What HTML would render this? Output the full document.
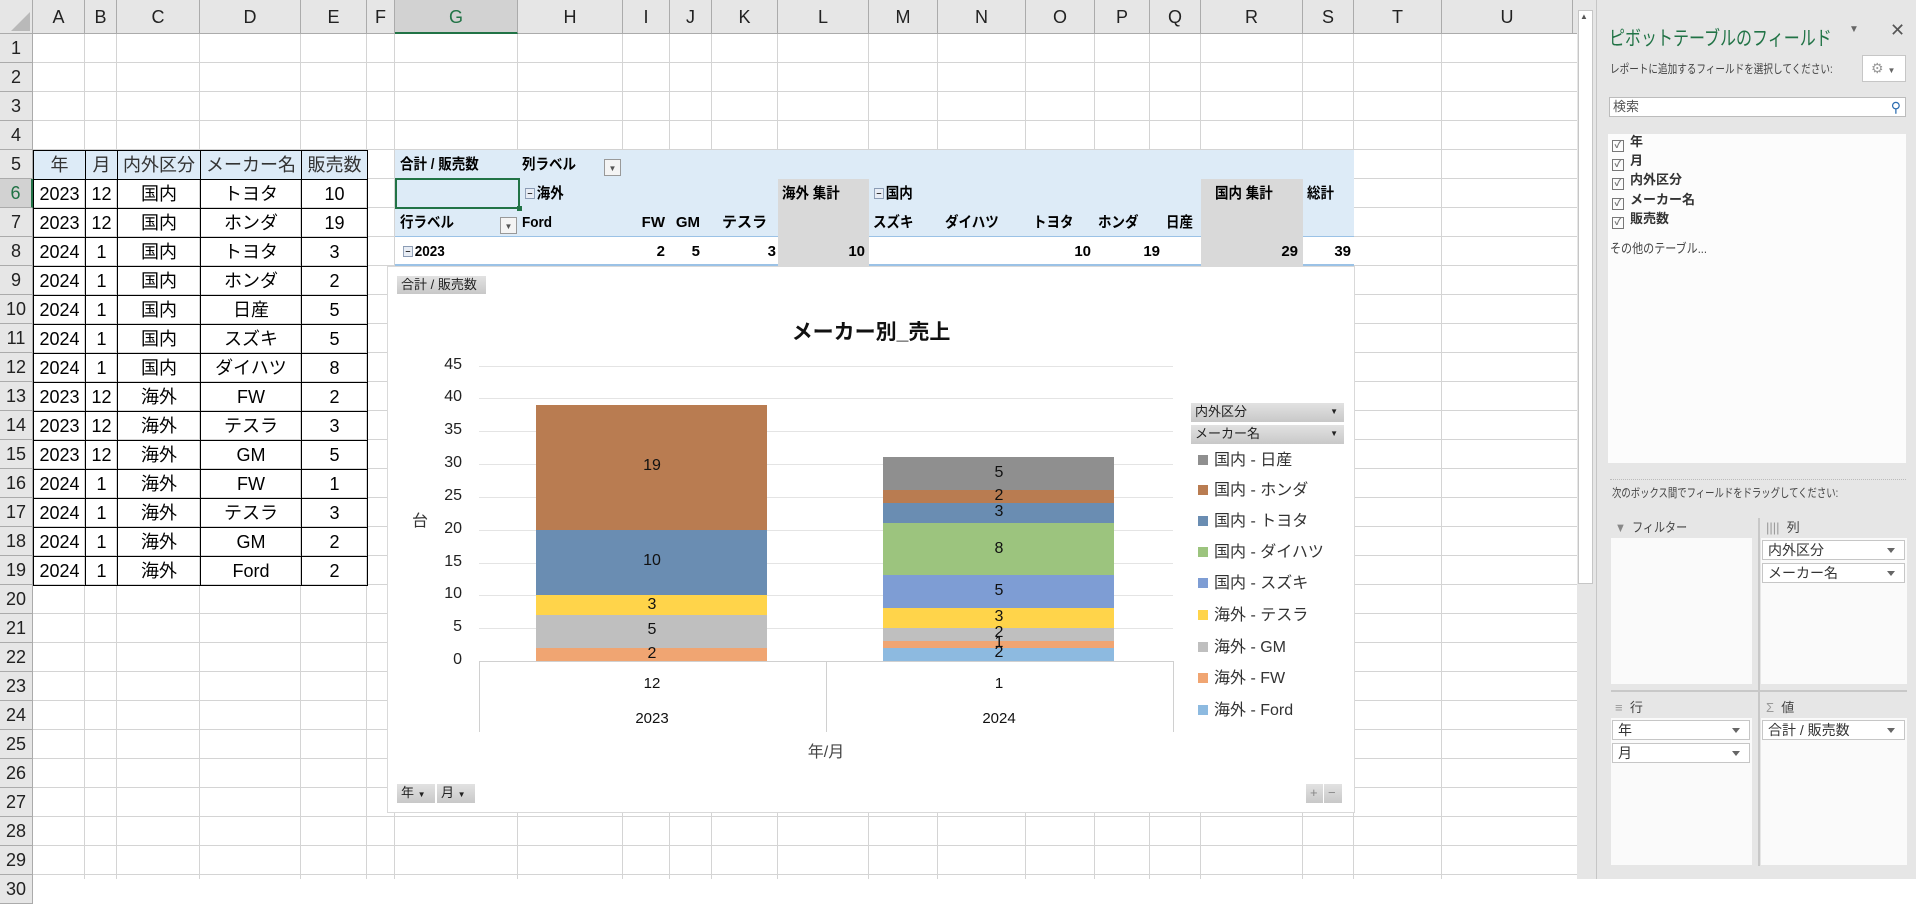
<!DOCTYPE html>
<html><head><meta charset="utf-8"><style>
*{margin:0;padding:0;box-sizing:border-box}
body{width:1916px;height:879px;position:relative;overflow:hidden;background:#fff;font-family:"Liberation Sans","Noto Sans CJK JP",sans-serif;color:#000}
.a{position:absolute}
.vl{position:absolute;top:34px;height:845px;width:1px;background:#d4d4d4}
.ch{position:absolute;top:0;height:34px;font-size:18px;color:#222;text-align:center;line-height:34px;border-right:1px solid #ababab;background:#e6e6e6;border-bottom:1px solid #ababab}
.rh{position:absolute;left:0;width:33px;height:29px;font-size:18px;color:#222;text-align:center;line-height:29px;background:#e6e6e6;border-bottom:1px solid #ababab;border-right:1px solid #ababab}
table.d{position:absolute;left:33px;top:150px;border-collapse:collapse;font-size:18px}
table.d td{border:1.5px solid #000;height:29px;text-align:center;padding:0;line-height:26px}
table.d tr:first-child td{background:#ddebf7;color:#333}
.pv{position:absolute;font-size:15px;font-weight:bold;line-height:29px;white-space:nowrap;transform:scaleX(0.9);transform-origin:left}
.pr{position:absolute;font-size:15px;font-weight:bold;line-height:29px;text-align:right;white-space:nowrap}
.dd{position:absolute;width:17px;height:17px;border:1px solid #999;background:#f4f4f4;font-size:8px;text-align:center;line-height:18px;color:#555}
.mn{display:inline-block;width:11px;height:11px;border:1px solid #8a9bb4;background:#e8edf5;vertical-align:-1px;margin-right:2px;position:relative}
.mn:after{content:"";position:absolute;left:2px;top:4px;width:5px;height:1px;background:#333}
.gl{position:absolute;left:479px;width:694px;height:1px;background:#e4e4e4}
.yl{position:absolute;left:420px;width:42px;text-align:right;font-size:16px;color:#222}
.seg{position:absolute}
.lb{position:absolute;font-size:16px;color:#111;text-align:center;width:40px}
.lg{position:absolute;left:1198px;font-size:16px;color:#333;line-height:20px}
.lg i{display:inline-block;width:10px;height:10px;margin-right:6px;vertical-align:0}
.btn{position:absolute;background:linear-gradient(#e2e2e2,#c8c8c8);font-size:13px;color:#222;line-height:18px;padding-left:4px}
.pane{position:absolute;left:1596px;top:0;width:320px;height:879px;background:#e6e6e6;border-left:1px solid #c6c6c6}
.fi{position:absolute;height:20px;background:#fff;border:1px solid #c6c6c6;font-size:14px;line-height:18px;padding-left:5px;color:#333}
.fi:after{content:"";position:absolute;right:9px;top:7px;border:4px solid transparent;border-top:5px solid #666}
.cb{position:absolute;left:1612px;font-size:13px;font-weight:bold;color:#333;line-height:16px}
.cb i{display:inline-block;width:12px;height:12px;border:1px solid #777;margin-right:6px;vertical-align:-2px;font-style:normal;font-size:10px;line-height:10px;text-align:center;color:#777}
.sx{transform-origin:left;white-space:nowrap}
</style></head><body>

<div class="a" style="left:0;top:0;width:33px;height:34px;background:#e6e6e6;border-right:1px solid #ababab;border-bottom:1px solid #ababab"></div>
<div class="a" style="left:11px;top:12px;width:0;height:0;border-left:19px solid transparent;border-bottom:19px solid #b9b9b9"></div>
<div class="ch" style="left:33px;width:52px">A</div>
<div class="ch" style="left:85px;width:32px">B</div>
<div class="ch" style="left:117px;width:83px">C</div>
<div class="ch" style="left:200px;width:101px">D</div>
<div class="ch" style="left:301px;width:66px">E</div>
<div class="ch" style="left:367px;width:28px">F</div>
<div class="ch" style="left:395px;width:123px;background:#d2d2d2;color:#217346;border-bottom:2px solid #217346">G</div>
<div class="ch" style="left:518px;width:105px">H</div>
<div class="ch" style="left:623px;width:47px">I</div>
<div class="ch" style="left:670px;width:42px">J</div>
<div class="ch" style="left:712px;width:66px">K</div>
<div class="ch" style="left:778px;width:91px">L</div>
<div class="ch" style="left:869px;width:69px">M</div>
<div class="ch" style="left:938px;width:88px">N</div>
<div class="ch" style="left:1026px;width:69px">O</div>
<div class="ch" style="left:1095px;width:55px">P</div>
<div class="ch" style="left:1150px;width:51px">Q</div>
<div class="ch" style="left:1201px;width:102px">R</div>
<div class="ch" style="left:1303px;width:51px">S</div>
<div class="ch" style="left:1354px;width:88px">T</div>
<div class="ch" style="left:1442px;width:131px">U</div>
<div class="ch" style="left:1573px;width:4px;border-right:none"></div>

<div class="a" style="left:33px;top:34px;width:1544px;height:845px;background:repeating-linear-gradient(to bottom,transparent 0,transparent 28px,#d4d4d4 28px,#d4d4d4 29px)"></div>
<div class="vl" style="left:84px"></div><div class="vl" style="left:116px"></div><div class="vl" style="left:199px"></div><div class="vl" style="left:300px"></div><div class="vl" style="left:366px"></div><div class="vl" style="left:394px"></div><div class="vl" style="left:517px"></div><div class="vl" style="left:622px"></div><div class="vl" style="left:669px"></div><div class="vl" style="left:711px"></div><div class="vl" style="left:777px"></div><div class="vl" style="left:868px"></div><div class="vl" style="left:937px"></div><div class="vl" style="left:1025px"></div><div class="vl" style="left:1094px"></div><div class="vl" style="left:1149px"></div><div class="vl" style="left:1200px"></div><div class="vl" style="left:1302px"></div><div class="vl" style="left:1353px"></div><div class="vl" style="left:1441px"></div>

<div class="rh" style="top:34px">1</div><div class="rh" style="top:63px">2</div><div class="rh" style="top:92px">3</div><div class="rh" style="top:121px">4</div><div class="rh" style="top:150px">5</div><div class="rh" style="top:179px;background:#d2d2d2;color:#217346;border-right:2px solid #217346">6</div><div class="rh" style="top:208px">7</div><div class="rh" style="top:237px">8</div><div class="rh" style="top:266px">9</div><div class="rh" style="top:295px">10</div><div class="rh" style="top:324px">11</div><div class="rh" style="top:353px">12</div><div class="rh" style="top:382px">13</div><div class="rh" style="top:411px">14</div><div class="rh" style="top:440px">15</div><div class="rh" style="top:469px">16</div><div class="rh" style="top:498px">17</div><div class="rh" style="top:527px">18</div><div class="rh" style="top:556px">19</div><div class="rh" style="top:585px">20</div><div class="rh" style="top:614px">21</div><div class="rh" style="top:643px">22</div><div class="rh" style="top:672px">23</div><div class="rh" style="top:701px">24</div><div class="rh" style="top:730px">25</div><div class="rh" style="top:759px">26</div><div class="rh" style="top:788px">27</div><div class="rh" style="top:817px">28</div><div class="rh" style="top:846px">29</div><div class="rh" style="top:875px">30</div>

<table class="d">
<colgroup><col style="width:52px"><col style="width:32px"><col style="width:83px"><col style="width:101px"><col style="width:66px"></colgroup>
<tr><td>年</td><td>月</td><td>内外区分</td><td>メーカー名</td><td>販売数</td></tr>
<tr><td>2023</td><td>12</td><td>国内</td><td>トヨタ</td><td>10</td></tr>
<tr><td>2023</td><td>12</td><td>国内</td><td>ホンダ</td><td>19</td></tr>
<tr><td>2024</td><td>1</td><td>国内</td><td>トヨタ</td><td>3</td></tr>
<tr><td>2024</td><td>1</td><td>国内</td><td>ホンダ</td><td>2</td></tr>
<tr><td>2024</td><td>1</td><td>国内</td><td>日産</td><td>5</td></tr>
<tr><td>2024</td><td>1</td><td>国内</td><td>スズキ</td><td>5</td></tr>
<tr><td>2024</td><td>1</td><td>国内</td><td>ダイハツ</td><td>8</td></tr>
<tr><td>2023</td><td>12</td><td>海外</td><td>FW</td><td>2</td></tr>
<tr><td>2023</td><td>12</td><td>海外</td><td>テスラ</td><td>3</td></tr>
<tr><td>2023</td><td>12</td><td>海外</td><td>GM</td><td>5</td></tr>
<tr><td>2024</td><td>1</td><td>海外</td><td>FW</td><td>1</td></tr>
<tr><td>2024</td><td>1</td><td>海外</td><td>テスラ</td><td>3</td></tr>
<tr><td>2024</td><td>1</td><td>海外</td><td>GM</td><td>2</td></tr>
<tr><td>2024</td><td>1</td><td>海外</td><td>Ford</td><td>2</td></tr>
</table>

<div class="a" style="left:395px;top:150px;width:959px;height:87px;background:#ddebf7;border-bottom:1px solid #9bc2e6"></div>
<div class="a" style="left:395px;top:237px;width:959px;height:29px;background:#fff;border-bottom:2px solid #9bc2e6"></div>
<div class="a" style="left:778px;top:179px;width:91px;height:87px;background:#d9d9d9"></div>
<div class="a" style="left:1201px;top:179px;width:102px;height:87px;background:#d9d9d9"></div>
<div class="a" style="left:395px;top:178px;width:125px;height:31px;border:2px solid #217346"></div>
<div class="a" style="left:517px;top:206px;width:5px;height:5px;background:#217346"></div>
<div class="pv" style="left:400px;top:150px">合計 / 販売数</div>
<div class="pv" style="left:522px;top:150px">列ラベル</div>
<div class="dd" style="left:604px;top:159px">▼</div>
<div class="pv" style="left:525px;top:179px"><span class="mn"></span>海外</div>
<div class="pv" style="left:782px;top:179px">海外 集計</div>
<div class="pv" style="left:874px;top:179px"><span class="mn"></span>国内</div>
<div class="pv" style="left:1215px;top:179px">国内 集計</div>
<div class="pv" style="left:1307px;top:179px">総計</div>
<div class="pv" style="left:400px;top:208px">行ラベル</div>
<div class="dd" style="left:500px;top:217px">▼</div>
<div class="pv" style="left:522px;top:208px">Ford</div>
<div class="pr" style="left:623px;width:42px;top:208px">FW</div>
<div class="pr" style="left:670px;width:30px;top:208px">GM</div>
<div class="pr" style="left:712px;width:55px;top:208px">テスラ</div>
<div class="pv" style="left:873px;top:208px">スズキ</div>
<div class="pv" style="left:945px;top:208px">ダイハツ</div>
<div class="pv" style="left:1033px;top:208px">トヨタ</div>
<div class="pv" style="left:1098px;top:208px">ホンダ</div>
<div class="pv" style="left:1166px;top:208px">日産</div>
<div class="pv" style="left:403px;top:237px"><span class="mn"></span>2023</div>
<div class="pr" style="left:623px;width:42px;top:237px">2</div>
<div class="pr" style="left:670px;width:30px;top:237px">5</div>
<div class="pr" style="left:712px;width:64px;top:237px">3</div>
<div class="pr" style="left:778px;width:87px;top:237px">10</div>
<div class="pr" style="left:1026px;width:65px;top:237px">10</div>
<div class="pr" style="left:1095px;width:65px;top:237px">19</div>
<div class="pr" style="left:1201px;width:97px;top:237px">29</div>
<div class="pr" style="left:1303px;width:48px;top:237px">39</div>

<div class="a" style="left:387px;top:266px;width:968px;height:547px;background:#fff;border:1px solid #d9d9d9"></div>
<div class="btn" style="left:397px;top:276px;width:89px">合計 / 販売数</div>
<div class="a" style="left:387px;top:316px;width:968px;text-align:center;font-size:21px;font-weight:bold;color:#111">メーカー別_売上</div>
<div class="gl" style="top:366px"></div><div class="gl" style="top:398px"></div><div class="gl" style="top:431px"></div><div class="gl" style="top:464px"></div><div class="gl" style="top:497px"></div><div class="gl" style="top:530px"></div><div class="gl" style="top:563px"></div><div class="gl" style="top:595px"></div><div class="gl" style="top:628px"></div>
<div class="yl" style="top:356px">45</div><div class="yl" style="top:388px">40</div><div class="yl" style="top:421px">35</div><div class="yl" style="top:454px">30</div><div class="yl" style="top:487px">25</div><div class="yl" style="top:520px">20</div><div class="yl" style="top:553px">15</div><div class="yl" style="top:585px">10</div><div class="yl" style="top:618px">5</div><div class="yl" style="top:651px">0</div>
<div class="a" style="left:412px;top:507px;font-size:16px;color:#333">台</div>
<div class="seg" style="left:536px;width:231px;top:648px;height:13px;background:#f0a572"></div>
<div class="seg" style="left:536px;width:231px;top:615px;height:33px;background:#bfbfbf"></div>
<div class="seg" style="left:536px;width:231px;top:595px;height:20px;background:#ffd44a"></div>
<div class="seg" style="left:536px;width:231px;top:530px;height:65px;background:#6a8db2"></div>
<div class="seg" style="left:536px;width:231px;top:405px;height:125px;background:#b97c51"></div>
<div class="lb" style="left:632px;top:457px">19</div>
<div class="lb" style="left:632px;top:552px">10</div>
<div class="lb" style="left:632px;top:596px">3</div>
<div class="lb" style="left:632px;top:621px">5</div>
<div class="lb" style="left:632px;top:645px">2</div>
<div class="seg" style="left:883px;width:231px;top:648px;height:13px;background:#8dbae0"></div>
<div class="seg" style="left:883px;width:231px;top:641px;height:7px;background:#f0a572"></div>
<div class="seg" style="left:883px;width:231px;top:628px;height:13px;background:#bfbfbf"></div>
<div class="seg" style="left:883px;width:231px;top:608px;height:20px;background:#ffd44a"></div>
<div class="seg" style="left:883px;width:231px;top:575px;height:33px;background:#7e9dd4"></div>
<div class="seg" style="left:883px;width:231px;top:523px;height:52px;background:#9cc47e"></div>
<div class="seg" style="left:883px;width:231px;top:503px;height:20px;background:#6a8db2"></div>
<div class="seg" style="left:883px;width:231px;top:490px;height:13px;background:#b97c51"></div>
<div class="seg" style="left:883px;width:231px;top:457px;height:33px;background:#8f8f8f"></div>
<div class="lb" style="left:979px;top:464px">5</div>
<div class="lb" style="left:979px;top:487px">2</div>
<div class="lb" style="left:979px;top:503px">3</div>
<div class="lb" style="left:979px;top:540px">8</div>
<div class="lb" style="left:979px;top:582px">5</div>
<div class="lb" style="left:979px;top:608px">3</div>
<div class="lb" style="left:979px;top:624px">2</div>
<div class="lb" style="left:979px;top:634px">1</div>
<div class="lb" style="left:979px;top:644px">2</div>
<div class="a" style="left:479px;top:661px;width:694px;height:1px;background:#d0d0d0"></div>
<div class="a" style="left:479px;top:661px;width:1px;height:71px;background:#d0d0d0"></div>
<div class="a" style="left:826px;top:661px;width:1px;height:71px;background:#d0d0d0"></div>
<div class="a" style="left:1173px;top:661px;width:1px;height:71px;background:#d0d0d0"></div>
<div class="lb" style="left:632px;top:675px;font-size:15px">12</div>
<div class="lb" style="left:979px;top:675px;font-size:15px">1</div>
<div class="lb" style="left:622px;top:710px;font-size:15px;width:60px">2023</div>
<div class="lb" style="left:969px;top:710px;font-size:15px;width:60px">2024</div>
<div class="lb" style="left:796px;top:738px;font-size:16px;width:60px;color:#444">年/月</div>
<div class="btn" style="left:1191px;top:403px;width:153px;height:19px">内外区分<span style="position:absolute;right:6px;font-size:8px">▼</span></div>
<div class="btn" style="left:1191px;top:425px;width:153px;height:19px">メーカー名<span style="position:absolute;right:6px;font-size:8px">▼</span></div>
<div class="lg" style="top:451px"><i style="background:#8f8f8f"></i>国内 - 日産</div>
<div class="lg" style="top:481px"><i style="background:#b97c51"></i>国内 - ホンダ</div>
<div class="lg" style="top:512px"><i style="background:#6a8db2"></i>国内 - トヨタ</div>
<div class="lg" style="top:543px"><i style="background:#9cc47e"></i>国内 - ダイハツ</div>
<div class="lg" style="top:574px"><i style="background:#7e9dd4"></i>国内 - スズキ</div>
<div class="lg" style="top:606px"><i style="background:#ffd44a"></i>海外 - テスラ</div>
<div class="lg" style="top:638px"><i style="background:#bfbfbf"></i>海外 - GM</div>
<div class="lg" style="top:669px"><i style="background:#f0a572"></i>海外 - FW</div>
<div class="lg" style="top:701px"><i style="background:#8dbae0"></i>海外 - Ford</div>
<div class="btn" style="left:397px;top:784px;width:38px;height:19px">年 <span style="font-size:8px">▼</span></div>
<div class="btn" style="left:437px;top:784px;width:38px;height:19px">月 <span style="font-size:8px">▼</span></div>
<div class="btn" style="left:1306px;top:784px;width:17px;height:19px;color:#888">+</div>
<div class="btn" style="left:1324px;top:784px;width:18px;height:19px;color:#888">−</div>

<div class="a" style="left:1577px;top:0;width:19px;height:879px;background:#e6e6e6"></div>
<div class="a" style="left:1578px;top:10px;width:15px;height:574px;background:#fff;border:1px solid #c6c6c6"></div>
<div class="a" style="left:1580px;top:12px;font-size:8px;color:#555">▲</div>

<div class="pane"></div>
<div class="a sx" style="left:1609px;top:22px;font-size:20px;color:#217346;transform:scaleX(0.8)">ピボットテーブルのフィールド</div>
<div class="a" style="left:1849px;top:24px;font-size:10px;color:#666">▼</div>
<div class="a" style="left:1890px;top:20px;font-size:18px;color:#555">✕</div>
<div class="a sx" style="left:1610px;top:60px;font-size:12px;color:#444;transform:scaleX(0.8)">レポートに追加するフィールドを選択してください:</div>
<div class="a" style="left:1862px;top:55px;width:44px;height:27px;background:#fff;border:1px solid #c6c6c6;font-size:14px;color:#999;line-height:25px;padding-left:8px">⚙ <span style="font-size:8px;color:#666">▼</span></div>
<div class="a" style="left:1609px;top:97px;width:297px;height:20px;background:#fff;border:1px solid #bcbcbc;font-size:13px;color:#555;line-height:18px;padding-left:3px">検索<span style="position:absolute;right:4px;top:0;color:#2b6cb0;font-size:14px">⚲</span></div>
<div class="a" style="left:1608px;top:134px;width:298px;height:329px;background:#fcfcfc"></div>
<div class="cb" style="top:134px"><i>✓</i>年</div>
<div class="cb" style="top:153px"><i>✓</i>月</div>
<div class="cb" style="top:172px"><i>✓</i>内外区分</div>
<div class="cb" style="top:192px"><i>✓</i>メーカー名</div>
<div class="cb" style="top:211px"><i>✓</i>販売数</div>
<div class="a sx" style="left:1610px;top:238px;font-size:13px;color:#444;transform:scaleX(0.85)">その他のテーブル...</div>
<div class="a" style="left:1610px;top:479px;width:296px;border-top:1px dotted #bbb"></div>
<div class="a sx" style="left:1612px;top:484px;font-size:12px;color:#444;transform:scaleX(0.78)">次のボックス間でフィールドをドラッグしてください:</div>
<div class="a sx" style="left:1615px;top:517px;font-size:13px;color:#444;transform:scaleX(0.85)"><span style="color:#888">▼</span>&nbsp; フィルター</div>
<div class="a" style="left:1766px;top:517px;font-size:13px;color:#444"><span style="color:#999">||||</span>&nbsp; 列</div>
<div class="a" style="left:1615px;top:697px;font-size:13px;color:#444"><span style="color:#999">≡</span>&nbsp; 行</div>
<div class="a" style="left:1766px;top:697px;font-size:13px;color:#444"><span style="color:#999">Σ</span>&nbsp; 値</div>
<div class="a" style="left:1611px;top:538px;width:141px;height:146px;background:#fafafa"></div>
<div class="a" style="left:1761px;top:538px;width:146px;height:146px;background:#fafafa"></div>
<div class="a" style="left:1611px;top:718px;width:141px;height:147px;background:#fafafa"></div>
<div class="a" style="left:1761px;top:718px;width:146px;height:147px;background:#fafafa"></div>
<div class="a" style="left:1758px;top:518px;width:2px;height:348px;background:#c8c8c8"></div>
<div class="a" style="left:1611px;top:690px;width:296px;height:2px;background:#c8c8c8"></div>
<div class="fi" style="left:1762px;top:540px;width:143px">内外区分</div>
<div class="fi" style="left:1762px;top:563px;width:143px">メーカー名</div>
<div class="fi" style="left:1612px;top:720px;width:138px">年</div>
<div class="fi" style="left:1612px;top:743px;width:138px">月</div>
<div class="fi" style="left:1762px;top:720px;width:143px">合計 / 販売数</div>
</body></html>
